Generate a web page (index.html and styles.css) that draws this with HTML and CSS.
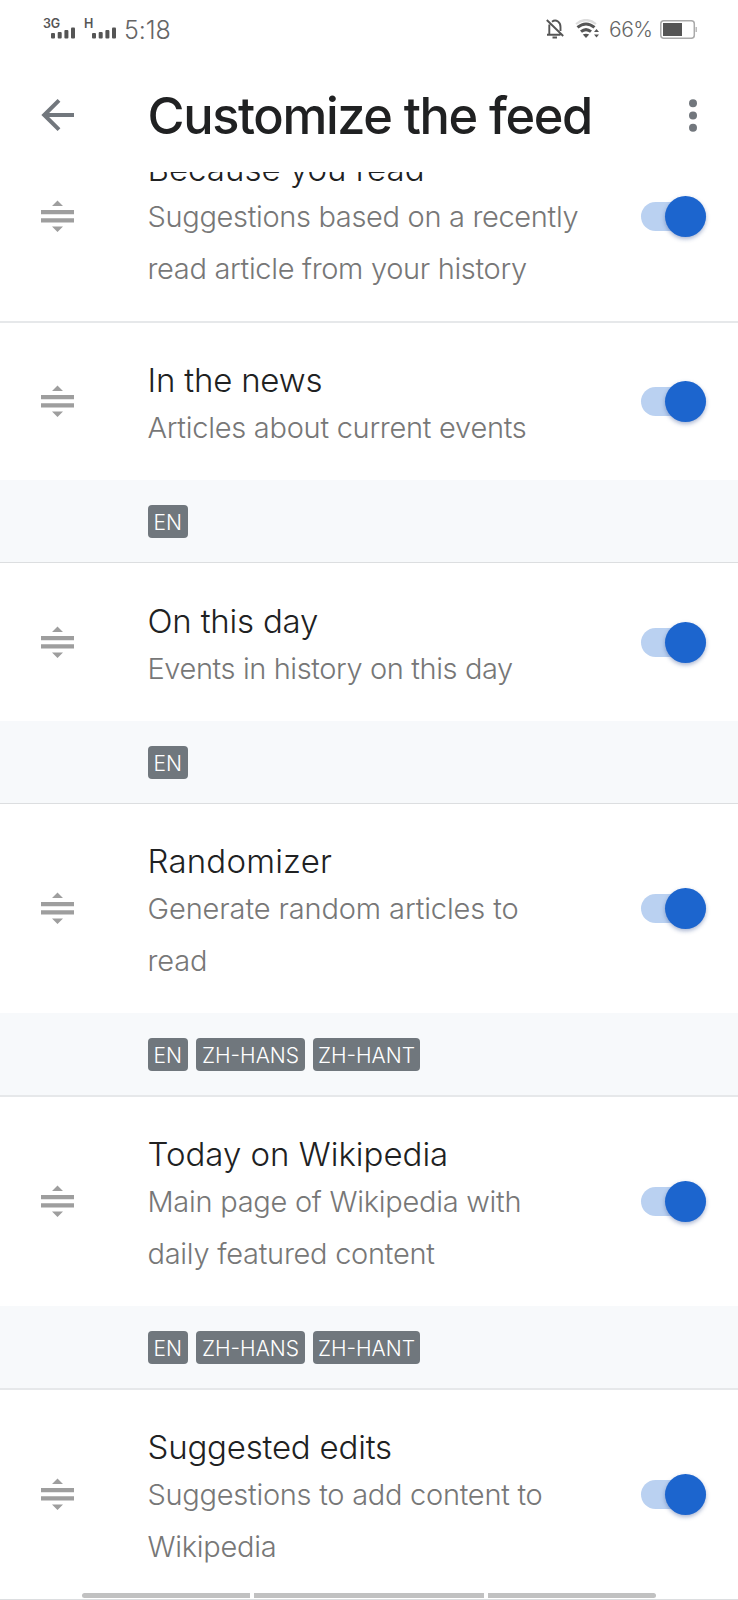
FILE: index.html
```html
<!DOCTYPE html>
<html lang="en">
<head>
<meta charset="utf-8">
<title>Customize the feed</title>
<link rel="stylesheet" href="styles.css">
</head>
<body>
<svg class="defs" width="0" height="0" aria-hidden="true">
  <symbol id="drag" viewBox="0 0 33 32">
    <path d="M11 6 16.500 0.500 22 6ZM0 10h33v4.300H0ZM0 18.200h33v4.300H0ZM11 26.500h11L16.500 32Z"/>
  </symbol>
  <symbol id="signal" viewBox="0 0 25 12">
    <rect x="0" y="6" width="4" height="5.500" rx="1"/><rect x="6.700" y="5" width="4" height="6.500" rx="1"/><rect x="13.400" y="3" width="4" height="8.500" rx="1"/><rect x="20" y="0.500" width="4" height="11" rx="1"/>
  </symbol>
</svg>
<div class="screen">
  <div class="status">
    <span class="net">3G</span><svg class="signal"><use href="#signal"/></svg>
    <span class="net net-h">H</span><svg class="signal"><use href="#signal"/></svg>
    <span class="clock">5:18</span>
    <span class="spacer"></span>
    <svg class="bell" viewBox="0 0 18 20" fill="none" stroke="#555" stroke-width="1.900"><path d="M.8 1 17.200 17M6 2.700Q9 .4 12 2.500Q14.500 4.300 14.500 8V12M3.300 5.500V15.800H14.500M1 15.800H4"/><path d="M6.500 18.500h4.500" stroke-width="2"/></svg>
    <svg class="wifi" viewBox="0 0 24 20" fill="none" stroke="#555"><path d="M1 5Q11 -3 21 5" stroke="#ddd" stroke-width="2.200"/><path d="M2.500 8.400Q11 1.500 19.500 8.400M6 12.700Q11 8.500 16 12.700" stroke-width="3"/><path d="M7.800 15.500Q11 13.800 14.200 15.500L11 19ZM19 13 21.500 10 24 13ZM19 15.500 21.500 18.500 24 15.500Z" fill="#555" stroke="none"/></svg>
    <span class="percent">66%</span>
    <svg class="battery" viewBox="0 0 37 19"><rect x=".8" y=".8" width="33.500" height="17.400" rx="3" fill="none" stroke="#aaa" stroke-width="1.500"/><rect x="3" y="3" width="19" height="13" fill="#555"/><path d="M36.200 7v5" stroke="#aaa" stroke-width="1.200"/></svg>
  </div>
  <header class="appbar">
    <svg class="back" viewBox="0 0 33 32" fill="none" stroke="#72777d" stroke-width="4"><path d="M33 16H3M18 1.400 3.200 16 18 30.600"/></svg>
    <h1 class="heading">Customize the feed</h1>
    <svg class="more" viewBox="0 0 8 33" fill="#72777d"><circle cx="4" cy="4.200" r="4"/><circle cx="4" cy="16.500" r="4"/><circle cx="4" cy="28.800" r="4"/></svg>
  </header>
  <main class="list">
    <section class="item">
      <div class="row"><svg class="drag"><use href="#drag"/></svg><div class="text"><div class="title">Because you read</div><div class="sub tight">Suggestions based on a recently<br>read article from your history</div></div><div class="toggle"><i class="thumb"></i></div></div>
    </section>
    <section class="item thin">
      <div class="row"><svg class="drag"><use href="#drag"/></svg><div class="text"><div class="title snug">In the news</div><div class="sub">Articles about current events</div></div><div class="toggle"><i class="thumb"></i></div></div>
      <div class="langs"><span class="tag en">EN</span></div>
    </section>
    <section class="item thin tall">
      <div class="row"><svg class="drag"><use href="#drag"/></svg><div class="text"><div class="title snug">On this day</div><div class="sub tighter">Events in history on this day</div></div><div class="toggle"><i class="thumb"></i></div></div>
      <div class="langs"><span class="tag en">EN</span></div>
    </section>
    <section class="item">
      <div class="row"><svg class="drag"><use href="#drag"/></svg><div class="text"><div class="title wide">Randomizer</div><div class="sub loose">Generate random articles to<br>read</div></div><div class="toggle"><i class="thumb"></i></div></div>
      <div class="langs"><span class="tag en">EN</span><span class="tag hans">ZH-HANS</span><span class="tag hant">ZH-HANT</span></div>
    </section>
    <section class="item">
      <div class="row"><svg class="drag"><use href="#drag"/></svg><div class="text"><div class="title">Today on Wikipedia</div><div class="sub">Main page of Wikipedia with<br>daily featured content</div></div><div class="toggle"><i class="thumb"></i></div></div>
      <div class="langs"><span class="tag en">EN</span><span class="tag hans">ZH-HANS</span><span class="tag hant">ZH-HANT</span></div>
    </section>
    <section class="item thin">
      <div class="row"><svg class="drag"><use href="#drag"/></svg><div class="text"><div class="title snug">Suggested edits</div><div class="sub">Suggestions to add content to<br>Wikipedia</div></div><div class="toggle"><i class="thumb"></i></div></div>
    </section>
  </main>
  <div class="gestures"><i class="pill side-l"></i><i class="pill mid"></i><i class="pill side-r"></i></div>
</div>
</body>
</html>
```
FILE: styles.css
```css
* { box-sizing: border-box; }
body { margin: 0; background: #fff; font-family: Inter, "Liberation Sans", sans-serif; }
.defs { display: block; height: 0; }
.screen { position: relative; width: 738px; height: 1600px; overflow: hidden; display: flex; flex-direction: column; }

.status { height: 60px; flex: none; display: flex; align-items: flex-start; padding: 0 41px 0 43px; color: #666; }
.net { width: 8px; margin-top: 17px; font-size: 12.500px; line-height: 14px; font-weight: 600; letter-spacing: -0.3px; color: #555; white-space: nowrap; }
.net-h { margin-left: 8px; }
.signal { width: 25px; height: 12px; margin-top: 27px; fill: #555; }
.clock { margin: 15px 0 0 7px; font-size: 25px; line-height: 30px; font-weight: 300; letter-spacing: -0.1px; }
.spacer { flex: 1; }
.bell { width: 18px; height: 20px; margin-top: 19px; }
.wifi { width: 24px; height: 20px; margin: 19px 0 0 11px; }
.percent { margin: 14.500px 0 0 10px; width: 43px; font-size: 21px; line-height: 30px; font-weight: 300; letter-spacing: -0.5px; white-space: nowrap; }
.battery { width: 37px; height: 19px; margin: 20px 0 0 8px; }

.appbar { height: 112px; flex: none; display: flex; align-items: flex-start; padding: 0 41px; }
.back { width: 33px; height: 32px; margin-top: 39px; }
.heading { flex: 1; margin: 26px 0 0 73.500px; font-size: 50.500px; line-height: 60px; font-weight: 450; letter-spacing: -1.370px; color: #202122; white-space: nowrap; }
.more { width: 8px; height: 33px; margin-top: 38.500px; }

.list { flex: 1; min-height: 0; overflow: hidden; }
.item { border-bottom: 2px solid #e6e8ea; }
.item:first-child { margin-top: -60px; }
.thin { border-bottom: 1px solid #dcdee0; }
.row { display: flex; align-items: center; padding: 0 32px 0 41px; }
.drag { width: 33px; height: 32px; margin-bottom: 1px; fill: #9e9e9e; }
.text { flex: 1; margin-left: 73.500px; padding: 35px 0 26px; white-space: nowrap; }
.title { font-size: 33px; line-height: 44px; font-weight: 300; color: #202122; }
.sub { font-size: 29px; line-height: 52px; font-weight: 300; letter-spacing: -0.270px; color: #777; }
.snug { letter-spacing: -0.200px; }
.wide { letter-spacing: 0.200px; }
.tight { letter-spacing: -0.330px; }
.tighter { letter-spacing: -0.400px; }
.loose { letter-spacing: -0.120px; }
.toggle { width: 65px; height: 29px; margin-top: 0.500px; border-radius: 15px; background: #bad1f1; display: flex; align-items: center; justify-content: flex-end; }
.thumb { width: 41px; height: 41px; flex: none; border-radius: 50%; background: #1c65ce; box-shadow: 0 2px 4px rgba(40, 70, 140, 0.4); }

.langs { height: 82px; padding: 24.500px 0 0 147.500px; display: flex; gap: 8px; background: #f7f9fb; }
.tall .row { padding-top: 1px; }
.tag { height: 33px; border-radius: 4px; background: #70777d; color: #fff; font-size: 21px; line-height: 35px; font-weight: 300; text-align: center; white-space: nowrap; }
.en { width: 40.500px; }
.hans { width: 109px; }
.hant { width: 107px; }

.gestures { position: absolute; left: 82px; top: 1593px; display: flex; gap: 4px; }
.pill { height: 5px; background: #c1c1c1; }
.side-l { width: 168px; border-radius: 3px 0 0 3px; }
.mid { width: 230px; }
.side-r { width: 168px; border-radius: 0 3px 3px 0; }
```
